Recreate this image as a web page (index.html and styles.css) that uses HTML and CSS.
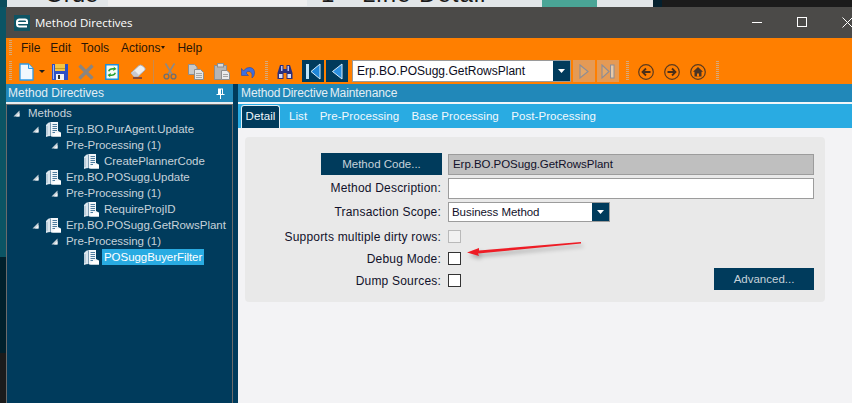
FILE: index.html
```html
<!DOCTYPE html>
<html lang="en">
<head>
<meta charset="UTF-8">
<meta name="viewport" content="width=device-width, initial-scale=1.0">
<title>Method Directives</title>
<link rel="stylesheet" href="styles.css">
</head>
<body>

<svg class="defs" width="0" height="0">
    <symbol id="doc-stack" viewBox="0 0 17 17">
        <path d="M1 4 Q3 1 6 1 L6 15 Q3 15 1 16 Z" fill="#dbe6ee"/>
        <path d="M2 5 L2 14" stroke="#9fb6c7" stroke-width="1"/>
        <path d="M6 1 H13 V10 L16 11.500 V15.500 H6 Z" fill="#f2f6f9"/>
        <path d="M5.500 1.500 V15" stroke="#7f9db3" stroke-width="1"/>
        <path d="M7.500 3.500 H12 M7.500 5.500 H12 M7.500 7.500 H12 M7.500 9.500 H12 M7.500 11.500 H10" stroke="#4f7d9f" stroke-width="1"/>
        <path d="M10 12 H16 V15.500 H7 Z" fill="#ffffff"/>
    </symbol>
    <symbol id="twist" viewBox="0 0 7 7">
        <path d="M6.500 .5 V6.500 H.5 Z" fill="#c9d3da"/>
        <path d="M6.500 3 V6.500 H3 Z" fill="#f4f6f7"/>
    </symbol>
    <symbol id="combo-arrow" viewBox="0 0 7 4">
        <path d="M0 0 H7 L3.500 4 Z" fill="#ffffff"/>
    </symbol>
</svg>

<div class="strip">
    <div class="strip-edge"></div>
    <div class="strip-app">
        <span class="strip-order">Orde</span>
        <span class="strip-box"></span>
        <span class="strip-num">1</span>
        <span class="strip-line">Line Detail</span>
        <span class="strip-open">Open</span>
        <span class="strip-usd">USD</span>
    </div>
    <div class="strip-navy"></div>
    <div class="strip-dark"></div>
</div>

<div class="desk">
    <div class="desk-edge"></div>
    <div class="window">

        <div class="titlebar">
            <svg class="logo" width="16" height="16" viewBox="0 0 16 16">
                <rect width="16" height="16" fill="#0f5464"/>
                <path d="M3 8 H13 V6.500 Q13 4.500 11 4.500 H5.500 Q3 4.500 3 7 V9 Q3 11.500 5.500 11.500 H13" fill="none" stroke="#ffffff" stroke-width="2"/>
            </svg>
            <span class="title-text">Method Directives</span>
            <div class="window-controls">
                <svg width="11" height="11" viewBox="0 0 11 11"><path d="M0 5.500 H10" stroke="#fff" stroke-width="1"/></svg>
                <svg width="11" height="11" viewBox="0 0 11 11"><rect x=".5" y=".5" width="9" height="9" fill="none" stroke="#fff" stroke-width="1"/></svg>
                <svg width="11" height="11" viewBox="0 0 11 11"><path d="M.5 .5 L10.500 10.500 M10.500 .5 L.5 10.500" stroke="#fff" stroke-width="1"/></svg>
            </div>
        </div>

        <div class="ribbon">
            <div class="menu">
                <span class="grip grip-menu"></span>
                <span class="menu-item">File</span>
                <span class="menu-item">Edit</span>
                <span class="menu-item">Tools</span>
                <span class="menu-item menu-actions">Actions<i class="menu-caret"></i></span>
                <span class="menu-item">Help</span>
            </div>
            <div class="tools">
                <span class="grip"></span>
                <span class="tool tool-new">
                    <svg width="15" height="18" viewBox="0 0 15 18"><path d="M1 1 H9.500 L14 5.500 V17 H1 Z" fill="#f2f8fd" stroke="#2f9ae6" stroke-width="1.300"/><path d="M9.500 1 V5.500 H14" fill="#cfe6f7" stroke="#2f9ae6"/></svg>
                </span>
                <i class="tool-caret"></i>
                <span class="tool tool-save">
                    <svg width="16" height="16" viewBox="0 0 16 16"><rect width="16" height="16" fill="#2e50c4"/><rect x="3" y="0" width="10" height="7" fill="#f5c542"/><rect x="3" y="4" width="10" height="1" fill="#c99a20"/><rect x="1" y="1" width="1" height="14" fill="#9fb4ee"/><rect x="4" y="10" width="8" height="6" fill="#f1f1f1"/><rect x="6" y="11" width="2" height="4" fill="#333"/></svg>
                </span>
                <span class="tool">
                    <svg width="16" height="16" viewBox="0 0 16 16"><path d="M1.500 1.500 L14.500 14.500 M14.500 1.500 L1.500 14.500" stroke="#8a8580" stroke-width="3.200"/></svg>
                </span>
                <span class="tool">
                    <svg width="14" height="16" viewBox="0 0 14 16"><rect x=".75" y=".75" width="12.500" height="14.500" fill="#f4fbf6" stroke="#1e8fd8" stroke-width="1.500"/><path d="M3 7 Q4 3.500 9 4 L8.500 2.500 L11.500 5 L8 7 L8.500 5.500 Q5 5.500 4.500 7.500 Z" fill="#27a12f"/><path d="M11 9 Q10 12.500 5 12 L5.500 13.500 L2.500 11 L6 9 L5.500 10.500 Q9 10.500 9.500 8.500 Z" fill="#27a12f"/></svg>
                </span>
                <span class="tool">
                    <svg width="16" height="15" viewBox="0 0 16 15"><path d="M1 9 L9 1.500 Q10.500 .5 12 1.500 L15 4 Q15.500 5.500 14.500 6.500 L8 12.500 H4 Z" fill="#eeeeee" stroke="#a9a9b0"/><path d="M1 9 L4 12.500 H8 L9 11 L5 7 Z" fill="#c9c9d0"/><path d="M3 14 H12" stroke="#3b2a5c" stroke-width="1.200"/></svg>
                </span>
                <span class="tool-sep"></span>
                <span class="tool tool-cut">
                    <svg width="14" height="17" viewBox="0 0 14 17"><path d="M2.500 .5 L9 11 M11.500 .5 L5 11" stroke="#8a8a8a" stroke-width="1.600"/><circle cx="3.500" cy="13.500" r="2.400" fill="none" stroke="#6f6f6f" stroke-width="1.400"/><circle cx="10.500" cy="13.500" r="2.400" fill="none" stroke="#6f6f6f" stroke-width="1.400"/></svg>
                </span>
                <span class="tool">
                    <svg width="16" height="16" viewBox="0 0 16 16"><path d="M.5 .5 H6.500 L9 3 V10.500 H.5 Z" fill="#c8c8c8" stroke="#8e8e8e"/><path d="M6.500 5.500 H12.500 L15.500 8.500 V15.500 H6.500 Z" fill="#e4e4e4" stroke="#8e8e8e"/><path d="M8 9.500 H14 M8 11.500 H14 M8 13.500 H14" stroke="#a5a5a5"/></svg>
                </span>
                <span class="tool">
                    <svg width="16" height="17" viewBox="0 0 16 17"><rect x=".5" y="2.500" width="12" height="14" fill="#b5b5b5" stroke="#8e8e8e"/><rect x="3.500" y=".5" width="6" height="3.500" fill="#d9d9d9" stroke="#8e8e8e"/><path d="M7.500 7.500 H13 L15.500 10 V16.500 H7.500 Z" fill="#ebebeb" stroke="#8e8e8e"/><path d="M9 11.500 H14 M9 13.500 H14" stroke="#a5a5a5"/></svg>
                </span>
                <span class="tool">
                    <svg width="15" height="14" viewBox="0 0 15 14"><path d="M2.500 6 Q5 2 9 2.500 Q13.500 3 13.500 8 Q13.500 11 11 13 Q12 8 9 6.500 Q6.500 5.500 5 8 L7.500 10.500 L.5 10.500 L.5 3.500 Z" fill="#3e6fe0" stroke="#2546a8" stroke-width=".6"/></svg>
                </span>
                <span class="grip grip-mid"></span>
                <span class="tool tool-find">
                    <svg width="16" height="16" viewBox="0 0 16 16"><path d="M3 1 H6.500 V5 H9.500 V1 H13 L15.500 9 V15 H9.500 V9 H6.500 V15 H.5 V9 Z" fill="#2b2f7c"/><rect x="2" y="10" width="3.500" height="4" fill="#d9dcf5"/><rect x="10.500" y="10" width="3.500" height="4" fill="#d9dcf5"/><rect x="4" y="2" width="1.500" height="5" fill="#b9bfe9"/><rect x="10.500" y="2" width="1.500" height="5" fill="#b9bfe9"/></svg>
                </span>
                <span class="nav-btn nav-first">
                    <svg width="16" height="17" viewBox="0 0 16 17"><rect x="1" y="1" width="3" height="15" fill="#bfe6fb"/><path d="M15 1 V16 L6 8.500 Z" fill="#1f86d6" stroke="#d6eefc" stroke-width="1"/></svg>
                </span>
                <span class="nav-btn nav-prev">
                    <svg width="12" height="17" viewBox="0 0 12 17"><path d="M11 1 V16 L1.500 8.500 Z" fill="#2a8fe0" stroke="#d6eefc" stroke-width="1"/></svg>
                </span>
                <div class="combo">
                    <span class="combo-text">Erp.BO.POSugg.GetRowsPlant</span>
                    <span class="combo-btn"><svg width="7" height="4"><use href="#combo-arrow"/></svg></span>
                </div>
                <span class="nav-btn nav-off nav-next">
                    <svg width="10" height="15" viewBox="0 0 10 15"><path d="M1 1 L9 7.500 L1 14 Z" fill="#e3a769" stroke="#8d8d95" stroke-width="1.100"/></svg>
                </span>
                <span class="nav-btn nav-off nav-last">
                    <svg width="14" height="15" viewBox="0 0 14 15"><path d="M1 1 L8 7.500 L1 14 Z" fill="#e3a769" stroke="#8d8d95" stroke-width="1.100"/><rect x="9.500" y="1" width="3.500" height="13" fill="#e8c9a8" stroke="#8d8d95"/></svg>
                </span>
                <span class="grip grip-nav"></span>
                <span class="tool tool-back">
                    <svg width="16" height="16" viewBox="0 0 16 16"><circle cx="8" cy="8" r="7.300" fill="none" stroke="#5b3a1e" stroke-width="1.200"/><path d="M12.500 8 H5 M8 4.500 L4.500 8 L8 11.500" fill="none" stroke="#4a2f18" stroke-width="1.800"/></svg>
                </span>
                <span class="tool">
                    <svg width="16" height="16" viewBox="0 0 16 16"><circle cx="8" cy="8" r="7.300" fill="none" stroke="#5b3a1e" stroke-width="1.200"/><path d="M3.500 8 H11 M8 4.500 L11.500 8 L8 11.500" fill="none" stroke="#4a2f18" stroke-width="1.800"/></svg>
                </span>
                <span class="tool">
                    <svg width="16" height="16" viewBox="0 0 16 16"><circle cx="8" cy="8" r="7.300" fill="none" stroke="#5b3a1e" stroke-width="1.200"/><path d="M8 3 L13 7.800 H11.500 V12.500 H4.500 V7.800 H3 Z" fill="#4a3526"/><rect x="7" y="9.500" width="2" height="3" fill="#ff7f00"/></svg>
                </span>
                <span class="grip grip-end"></span>
            </div>
        </div>

        <div class="workspace">
            <aside class="tree-panel">
                <div class="panel-head tree-head">
                    <span>Method Directives</span>
                    <svg class="pin" width="9" height="11" viewBox="0 0 9 11"><path d="M2 .5 H7 V6 H8.500 V7 H5 V11 H4 V7 H.5 V6 H2 Z M5 1.500 V6 H6 V1.500 Z" fill="#ffffff" fill-rule="evenodd"/></svg>
                </div>
                <ul class="tree">
                    <li class="tree-row lvl-0"><svg class="twist" width="7" height="7"><use href="#twist"/></svg>Methods</li>
                    <li class="tree-row lvl-1"><svg class="twist" width="7" height="7"><use href="#twist"/></svg><svg class="doc" width="17" height="17"><use href="#doc-stack"/></svg>Erp.BO.PurAgent.Update</li>
                    <li class="tree-row lvl-2"><svg class="twist" width="7" height="7"><use href="#twist"/></svg>Pre-Processing (1)</li>
                    <li class="tree-row lvl-3"><svg class="doc" width="17" height="17"><use href="#doc-stack"/></svg><span class="leaf">CreatePlannerCode</span></li>
                    <li class="tree-row lvl-1"><svg class="twist" width="7" height="7"><use href="#twist"/></svg><svg class="doc" width="17" height="17"><use href="#doc-stack"/></svg>Erp.BO.POSugg.Update</li>
                    <li class="tree-row lvl-2"><svg class="twist" width="7" height="7"><use href="#twist"/></svg>Pre-Processing (1)</li>
                    <li class="tree-row lvl-3"><svg class="doc" width="17" height="17"><use href="#doc-stack"/></svg><span class="leaf">RequireProjID</span></li>
                    <li class="tree-row lvl-1"><svg class="twist" width="7" height="7"><use href="#twist"/></svg><svg class="doc" width="17" height="17"><use href="#doc-stack"/></svg>Erp.BO.POSugg.GetRowsPlant</li>
                    <li class="tree-row lvl-2"><svg class="twist" width="7" height="7"><use href="#twist"/></svg>Pre-Processing (1)</li>
                    <li class="tree-row lvl-3"><svg class="doc" width="17" height="17"><use href="#doc-stack"/></svg><span class="leaf leaf-selected">POSuggBuyerFilter</span></li>
                </ul>
            </aside>

            <section class="main-panel">
                <div class="panel-head main-head">Method Directive Maintenance</div>
                <nav class="tabs">
                    <span class="tab tab-active">Detail</span>
                    <span class="tab">List</span>
                    <span class="tab">Pre-Processing</span>
                    <span class="tab">Base Processing</span>
                    <span class="tab">Post-Processing</span>
                </nav>
                <div class="content">
                    <div class="card">
                        <div class="form">
                            <div class="form-label"><button class="btn btn-code">Method Code...</button></div>
                            <div class="field field-readonly">Erp.BO.POSugg.GetRowsPlant</div>

                            <div class="form-label label-text">Method Description:</div>
                            <div class="field"></div>

                            <div class="form-label label-text">Transaction Scope:</div>
                            <div class="field field-select">
                                <span class="select-text">Business Method</span>
                                <span class="combo-btn"><svg width="7" height="4"><use href="#combo-arrow"/></svg></span>
                            </div>

                            <div class="form-label label-text label-dirty">Supports multiple dirty rows:</div>
                            <div class="check-cell"><span class="check check-off"></span></div>

                            <div class="form-label label-text">Debug Mode:</div>
                            <div class="check-cell"><span class="check"></span></div>

                            <div class="form-label label-text label-dump">Dump Sources:</div>
                            <div class="check-cell check-cell-last">
                                <span class="check check-dump"></span>
                                <button class="btn btn-advanced">Advanced...</button>
                            </div>
                        </div>

                        <svg class="red-arrow" width="124" height="24" viewBox="0 0 124 24">
                            <path d="M116 3 L14 11.500 L14 9 L2 13.500 L14 17 L13 14.500 L116 4.500 Z" fill="#ee1c25"/>
                        </svg>
                    </div>
                </div>
            </section>
        </div>
    </div>
</div>

</body>
</html>
```

FILE: styles.css
```css
* {
    box-sizing: border-box;
}

html, body {
    height: 100%;
}

body {
    margin: 0;
    overflow: hidden;
    background: #1a1a1a;
    font: 12px 'Liberation Sans', Arial, sans-serif;
    color: #11112a;
}

.defs {
    display: block;
    height: 0;
}

/* slice of the app behind the window */
.strip {
    display: flex;
    height: 7px;
    overflow: hidden;
}

.strip-edge {
    width: 7px;
    background: #0b4d5c;
}

.strip-app {
    width: 646px;
    display: flex;
    background: #e2e6e8;
    color: #1a1a1a;
    font-size: 24px;
    line-height: 24px;
}

.strip-app span {
    display: block;
    margin-top: -18px;
}

.strip-order {
    width: 63px;
    margin-left: 38px;
}

.strip-box {
    width: 199px;
    height: 24px;
    background: #eeeeee;
    margin-right: 14px;
}

.strip-num {
    width: 41px;
}

.strip-line {
    width: 180px;
    letter-spacing: 1px;
}

.strip-open {
    width: 55px;
    background: #4aa596;
    text-align: center;
    font-size: 10px;
    font-weight: bold;
}

.strip-usd {
    margin-left: 32px;
    font-size: 10px;
    color: #777;
}

.strip-navy {
    width: 9px;
    background: #04202e;
}

.strip-dark {
    flex: 1;
    background: #1b1b1b;
}

.desk {
    display: flex;
    height: 396px;
}

.desk-edge {
    width: 6px;
    background: linear-gradient(to bottom, #0b5464 0, #0b5464 250px, #00202c 250px, #00202c 346px, #1b1b1b 346px);
}

.window {
    flex: 1;
    min-width: 0;
    display: flex;
    flex-direction: column;
    background: #003b5c;
}

.titlebar {
    height: 31px;
    display: flex;
    align-items: center;
    padding-left: 8px;
    background: #4b4a48;
    flex-shrink: 0;
}

.title-text {
    margin-left: 5px;
    color: #ffffff;
    font: 11.500px 'Open Sans', sans-serif;
}

.window-controls {
    margin-left: auto;
    margin-right: -1px;
    display: flex;
    gap: 34px;
}

.ribbon {
    height: 46px;
    background: #ff7f00;
    flex-shrink: 0;
}

.grip {
    width: 3px;
    height: 20px;
    background: repeating-linear-gradient(to bottom, #d8a878 0, #d8a878 1px, transparent 1px, transparent 2px);
    flex-shrink: 0;
}

.menu {
    height: 22px;
    display: flex;
    align-items: center;
    padding-left: 3px;
    padding-bottom: 2px;
}

.grip-menu {
    margin-right: 9px;
    height: 16px;
}

.menu-item {
    margin-right: 10px;
    color: #2a1505;
}

.menu-actions {
    margin-left: 2px;
    margin-right: 12px;
    display: flex;
    align-items: center;
}

.menu-caret {
    width: 0;
    height: 0;
    margin-left: 1px;
    margin-bottom: 2px;
    border: 2.500px solid transparent;
    border-top: 3px solid #2a1505;
    border-bottom: 0;
}

.tools {
    height: 24px;
    display: flex;
    align-items: flex-start;
    padding-left: 3px;
}

.tool {
    width: 26px;
    height: 23px;
    display: flex;
    align-items: center;
    justify-content: center;
    flex-shrink: 0;
}

.tool-new {
    width: 25px;
    margin-left: 2px;
}

.tool-caret {
    width: 0;
    height: 0;
    margin-top: 10px;
    border: 3px solid transparent;
    border-top: 3px solid #1c1c1c;
    border-bottom: 0;
}

.tool-save {
    margin-left: 2px;
}

.tool-sep {
    width: 1px;
    height: 23px;
    margin-left: 2px;
    background: #c98a4e;
}

.tool-cut {
    margin-left: 3px;
}

.tools .grip {
    margin-top: 1px;
}

.grip-mid {
    margin-left: 4px;
}

.tool-find {
    margin-left: 4px;
}

.nav-btn {
    width: 22px;
    height: 22px;
    margin-left: 2px;
    display: flex;
    align-items: center;
    justify-content: center;
    background: #003b5c;
    flex-shrink: 0;
}

.nav-first {
    margin-left: 4px;
}

.nav-off {
    background: #e59a55;
}

.grip-nav {
    margin-left: 7px;
}

.tool-back {
    margin-left: 4px;
}

.grip-end {
    margin-left: 5px;
}

.combo {
    width: 219px;
    height: 22px;
    margin-left: 4px;
    display: flex;
    background: #ffffff;
    border: 1px solid #9a9a9a;
    color: #0c0c20;
}

.combo-text {
    flex: 1;
    padding-left: 4px;
    line-height: 20px;
}

.combo-btn {
    width: 17px;
    display: flex;
    align-items: center;
    justify-content: center;
    background: #003b5c;
}

.workspace {
    flex: 1;
    display: flex;
    min-height: 0;
}

.panel-head {
    height: 18px;
    line-height: 18px;
    background: #2188b9;
    color: #e3eef4;
}

.tree-panel {
    width: 227px;
    display: flex;
    flex-direction: column;
    flex-shrink: 0;
}

.tree-head {
    display: flex;
    justify-content: space-between;
    align-items: center;
    padding: 0 6px 0 2px;
}

.pin {
    margin-right: 2px;
}

.tree {
    flex: 1;
    list-style: none;
    margin: 0;
    padding: 1px 0 0;
    background: #003b5c;
    border-top: 2px solid #e8ecef;
    box-shadow: inset 1px 0 0 #6b6b6b, inset -1px 0 0 #6b6b6b, inset 0 1px 0 #6b6b6b;
}

.tree-row {
    height: 16px;
    display: flex;
    align-items: center;
    color: #c6d2da;
    font-size: 11.500px;
    letter-spacing: -.05px;
    white-space: nowrap;
}

.twist,
.doc {
    flex-shrink: 0;
}

.lvl-0 {
    padding-left: 7px;
}

.lvl-0 .twist {
    margin-right: 8px;
}

.lvl-1 {
    padding-left: 26px;
}

.lvl-1 .twist {
    margin-right: 6px;
}

.lvl-1 .doc {
    margin-right: 4px;
}

.lvl-2 {
    padding-left: 45px;
}

.lvl-2 .twist {
    margin-right: 8px;
}

.lvl-3 {
    padding-left: 77px;
}

.lvl-3 .doc {
    margin-right: 2px;
}

.leaf {
    padding: 0 2px;
    line-height: 16px;
}

.leaf-selected {
    background: #29abe2;
    color: #ffffff;
}

.main-panel {
    flex: 1;
    min-width: 0;
    margin-left: 5px;
    display: flex;
    flex-direction: column;
    background: #f3f3f5;
}

.main-head {
    padding-left: 3px;
    letter-spacing: -.1px;
    word-spacing: -1.500px;
}

.tabs {
    height: 26px;
    display: flex;
    align-items: flex-end;
    padding-left: 3px;
    border-top: 2px solid #f3f6f8;
    background: #29abe2;
    flex-shrink: 0;
}

.tab {
    height: 24px;
    line-height: 25px;
    margin-right: 12.500px;
    color: #f2f9fd;
    font-size: 11.500px;
    letter-spacing: .06px;
}

.tab-active {
    width: 39px;
    height: 23px;
    margin-right: 9px;
    line-height: 21px;
    text-align: center;
    background: #003b5c;
    border: 1px solid #e3eef4;
    border-bottom: 0;
    border-radius: 3px 3px 0 0;
}

.content {
    flex: 1;
    padding: 9px 27px 0 7px;
}

.card {
    position: relative;
    width: 580px;
    height: 165px;
    padding-top: 16px;
    background: #e9e9e9;
    border-radius: 4px;
}

.form {
    display: grid;
    grid-template-columns: 197px 366px;
    grid-template-rows: 24px 24px 24px 23px 20px 22px;
    column-gap: 6px;
}

.form-label {
    display: flex;
    justify-content: flex-end;
    align-items: flex-start;
}

.label-text {
    padding-top: 4px;
    padding-right: 1px;
    letter-spacing: .2px;
    white-space: nowrap;
}

.label-dirty {
    padding-top: 5px;
}

.label-dump {
    padding-top: 6px;
}

.btn {
    border: none;
    padding: 0;
    background: #003b5c;
    color: #c6d2da;
    font: inherit;
    font-size: 11.500px;
}

.btn-code {
    width: 121px;
    height: 22px;
}

.btn-advanced {
    width: 100px;
    height: 22px;
}

.field {
    height: 21px;
    margin-top: 1px;
    padding-left: 4px;
    line-height: 19px;
    background: #ffffff;
    border: 1px solid #9c9c9c;
    font-size: 11.500px;
    letter-spacing: -.05px;
}

.field-readonly {
    background: #bfbfbf;
}

.field-select {
    width: 162px;
    height: 20px;
    padding: 0;
    display: flex;
}

.select-text {
    flex: 1;
    padding-left: 3px;
    line-height: 18px;
}

.check-cell {
    display: flex;
    align-items: center;
    justify-content: space-between;
}

.check {
    width: 13px;
    height: 13px;
    background: #ffffff;
    border: 1px solid #333333;
}

.check-off {
    background: #f1f1f1;
    border-color: #b9b9b9;
}

.check-dump {
    margin-top: 3px;
}

.red-arrow {
    position: absolute;
    left: 220px;
    top: 102px;
    filter: drop-shadow(2px 3px 2px rgba(0, 0, 0, .3));
}
```
